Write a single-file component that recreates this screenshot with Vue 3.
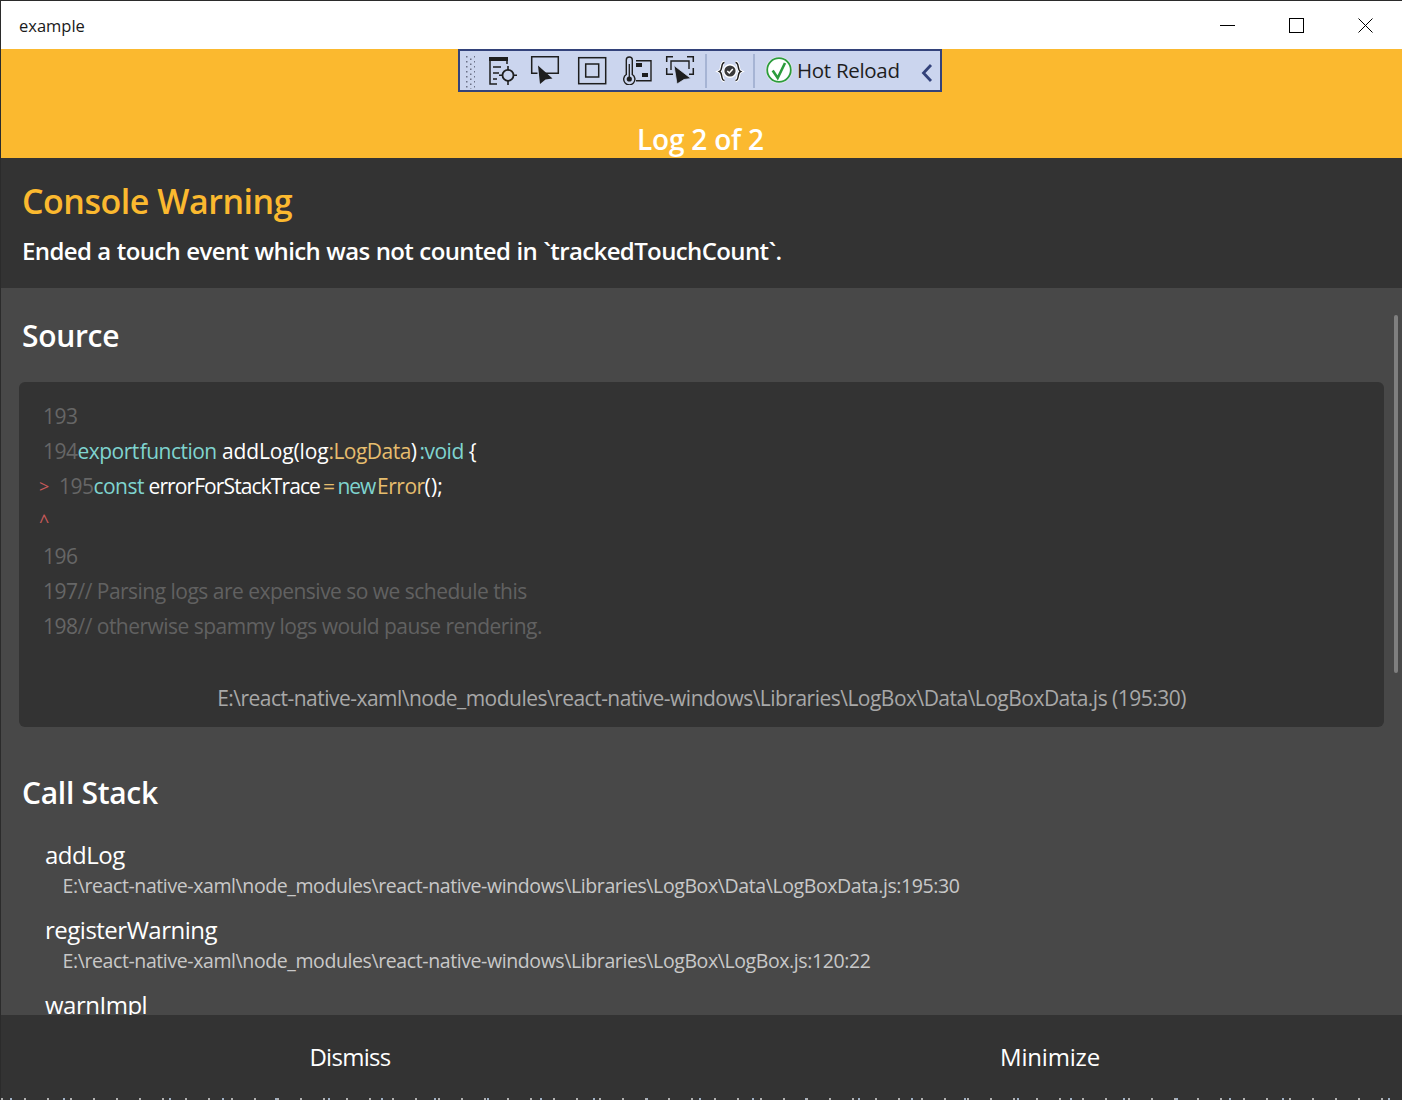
<script setup>
const stack = [
  { name: 'addLog', loc: 'E:\\react-native-xaml\\node_modules\\react-native-windows\\Libraries\\LogBox\\Data\\LogBoxData.js:195:30' },
  { name: 'registerWarning', loc: 'E:\\react-native-xaml\\node_modules\\react-native-windows\\Libraries\\LogBox\\LogBox.js:120:22' },
  { name: 'warnImpl', loc: '' },
]
</script>

<template>
  <div class="window">
    <header class="titlebar">
      <span class="title">example</span>
      <div class="caption">
        <svg class="cap" width="15" height="15" viewBox="0 0 15 15"><path d="M0 7.5H15" stroke="#000" fill="none" /></svg>
        <svg class="cap" width="15" height="15" viewBox="0 0 15 15"><rect x="0.5" y="0.5" width="14" height="14" stroke="#000" fill="none" /></svg>
        <svg class="cap" width="15" height="15" viewBox="0 0 15 15"><path d="M0.5 0.5L14.5 14.5M14.5 0.5L0.5 14.5" stroke="#000" fill="none" /></svg>
      </div>
    </header>

    <section class="banner">
      <div class="toolbar">
        <svg class="grip" width="12" height="34" viewBox="0 0 12 34">
          <g fill="#6b7085">
            <rect v-for="i in 7" :key="'a'+i" x="3" :y="i * 5 - 4" width="1.5" height="1.5" />
            <rect v-for="i in 7" :key="'b'+i" x="7" :y="i * 5 - 1.5" width="1.5" height="1.5" />
            <rect v-for="i in 7" :key="'c'+i" x="11" :y="i * 5 - 4" width="1" height="1.5" />
          </g>
        </svg>
        <svg class="ic1" width="30" height="30" viewBox="0 0 30 30">
          <path d="M2 2H21V6H2z" fill="#1e1e1e" />
          <path d="M3 6V29H10M20 6V9" fill="none" stroke="#1e1e1e" stroke-width="1.5" />
          <path d="M6 12H14M6 18H12M6 24H10" stroke="#1e1e1e" stroke-width="1.5" />
          <circle cx="21" cy="20.3" r="5.5" fill="none" stroke="#1e1e1e" stroke-width="1.8" />
          <path d="M21 11V15M21 26V30M12 20.3H16M26 20.3H30" stroke="#1e1e1e" stroke-width="1.6" />
        </svg>
        <svg class="ic2" width="30" height="30" viewBox="0 0 30 30">
          <path d="M7.5 18.3H1.7V1.7H28.3V18.3H15" fill="none" stroke="#1e1e1e" stroke-width="1.5" />
          <path d="M8 10.5L22.5 23.5L15.5 24.5L10 29z" fill="#1e1e1e" />
        </svg>
        <svg class="ic3" width="30" height="30" viewBox="0 0 30 30">
          <rect x="1.7" y="2.7" width="27" height="26" fill="none" stroke="#1e1e1e" stroke-width="1.5" />
          <rect x="8.7" y="9" width="13" height="13" fill="none" stroke="#1e1e1e" stroke-width="1.5" />
        </svg>
        <svg class="ic4" width="30" height="30" viewBox="0 0 30 30">
          <path d="M4.3 5a3 3 0 0 1 6 0V19.5a5.6 5.6 0 1 1-6 0z" fill="none" stroke="#1e1e1e" stroke-width="1.4" />
          <circle cx="7.3" cy="24" r="2.6" fill="#1e1e1e" />
          <path d="M7.3 9V22" stroke="#1e1e1e" stroke-width="1.3" />
          <path d="M14 5.7H29V25.7H14" fill="none" stroke="#1e1e1e" stroke-width="1.4" />
          <rect x="14" y="8" width="6" height="4" fill="#1e1e1e" />
          <rect x="20" y="18" width="6" height="4" fill="#1e1e1e" />
        </svg>
        <svg class="ic5" width="30" height="30" viewBox="0 0 30 30">
          <path d="M1.7 7V1.7H8M22 1.7H28.3V7M1.7 13V19.3H8M28.3 13V19.3H24" fill="none" stroke="#1e1e1e" stroke-width="1.5" />
          <path d="M6 15V6H24V14" fill="none" stroke="#1e1e1e" stroke-width="1.4" />
          <path d="M9 10.5L26 23.5L19 24.5L12 29z" fill="#1e1e1e" stroke="#cbd5ee" stroke-width="0.8" />
        </svg>
        <span class="sep sep1"></span>
        <svg class="ic6" width="30" height="30" viewBox="0 0 30 30">
          <path d="M9.5 7.5C5.5 7.5 8 15 4.5 16.5C8 18 5.5 25.5 9.5 25.5M20.5 7.5C24.5 7.5 22 15 25.5 16.5C22 18 24.5 25.5 20.5 25.5" fill="none" stroke="#fff" stroke-width="3.4" />
          <path d="M9.5 7.5C5.5 7.5 8 15 4.5 16.5C8 18 5.5 25.5 9.5 25.5M20.5 7.5C24.5 7.5 22 15 25.5 16.5C22 18 24.5 25.5 20.5 25.5" fill="none" stroke="#1e1e1e" stroke-width="1.5" />
          <circle cx="15" cy="16" r="7" fill="#fff" />
          <circle cx="15" cy="16" r="5.6" fill="#3a3a3a" />
          <path d="M12.3 16L14.3 18L17.8 14" fill="none" stroke="#fff" stroke-width="1.5" />
        </svg>
        <span class="sep sep2"></span>
        <svg class="ic7" width="30" height="30" viewBox="0 0 30 30">
          <circle cx="15" cy="15" r="13.3" fill="#fff" stroke="#d4dbe8" stroke-width="0.8" />
          <circle cx="15" cy="15" r="11.8" fill="#fff" stroke="#2c9c3c" stroke-width="1.8" />
          <path d="M8.7 15.5L13.7 23L21 8" fill="none" stroke="#2c9c3c" stroke-width="2.6" />
        </svg>
        <span class="hot">Hot Reload</span>
        <svg class="chev" width="12" height="18" viewBox="0 0 12 18"><path d="M10 1L2.5 9L10 17" fill="none" stroke="#33427a" stroke-width="2.8" /></svg>
      </div>
      <div class="log-count">Log 2 of 2</div>
    </section>

    <section class="summary">
      <h1 class="level">Console Warning</h1>
      <p class="message">Ended a touch event which was not counted in `trackedTouchCount`.</p>
    </section>

    <main class="body">
      <div class="scrollbar"></div>
      <h2 class="heading">Source</h2>
      <div class="code">
        <div class="line"><span class="num">193</span></div>
        <div class="line"><span class="num">194</span><span class="kw">export</span><span class="kw g1">function</span><span class="pl wide"> addLog(log</span><span class="ty">:LogData</span><span class="pl">)</span><span class="kw g2">:void</span><span class="pl"> {</span></div>
        <div class="line"><span class="mark">&gt;</span><span class="num">195</span><span class="kw">const</span><span class="pl tight"> errorForStackTrace</span><span class="ty eq">=</span><span class="kw tighter">new</span><span class="ty err">Error</span><span class="pl loose">();</span></div>
        <div class="line"><span class="caret">^</span></div>
        <div class="line"><span class="num">196</span></div>
        <div class="line"><span class="num">197</span><span class="cm">// Parsing logs are expensive so we schedule this</span></div>
        <div class="line"><span class="num">198</span><span class="cm">// otherwise spammy logs would pause rendering.</span></div>
        <div class="file">E:\react-native-xaml\node_modules\react-native-windows\Libraries\LogBox\Data\LogBoxData.js (195:30)</div>
      </div>
      <h2 class="heading stack-heading">Call Stack</h2>
      <div class="frames">
        <div v-for="f in stack" :key="f.name" class="frame">
          <div class="fname">{{ f.name }}</div>
          <div v-if="f.loc" class="floc">{{ f.loc }}</div>
        </div>
      </div>
    </main>

    <footer class="actions">
      <div class="action">Dismiss</div>
      <div class="action">Minimize</div>
    </footer>
    <div class="strip"></div>
  </div>
</template>

<style>
html, body { margin: 0; background: #333; }
</style>

<style scoped>
.window {
  width: 1402px;
  height: 1100px;
  box-sizing: border-box;
  border-top: 1px solid #2b2b2b;
  border-left: 1px solid #2b2b2b;
  overflow: hidden;
  display: flex;
  flex-direction: column;
  font-family: "Open Sans", "Noto Sans", sans-serif;
  color: #fff;
  background: #333;
}
.titlebar {
  height: 48px;
  flex: none;
  box-sizing: border-box;
  padding-top: 1px;
  background: #fff;
  color: #1a1a1a;
  display: flex;
  align-items: center;
  justify-content: space-between;
}
.title { font-size: 16.5px; margin-left: 18px; }
.caption { display: flex; gap: 54px; margin-right: 29px; }
.cap { display: block; }
.banner {
  height: 109px;
  flex: none;
  background: #fbb92f;
  display: flex;
  flex-direction: column;
  align-items: center;
}
.toolbar {
  width: 484px;
  height: 43px;
  margin-right: 3px;
  box-sizing: border-box;
  border: 2px solid #33427a;
  padding-top: 4px;
  background: #cbd5ee;
  display: flex;
  align-items: flex-start;
  color: #1e1e1e;
  flex: none;
}
.toolbar svg { flex: none; }
.grip { margin-left: 3px; }
.ic1 { margin-left: 12px; }
.ic2 { margin-left: 13px; }
.ic3 { margin-left: 17px; }
.ic4 { margin-left: 15px; }
.ic5 { margin-left: 13px; }
.sep { width: 2px; height: 34px; margin-top: -1px; background: #a6b4d4; flex: none; }
.sep1 { margin-left: 10px; }
.ic6 { margin-left: 8px; }
.sep2 { margin-left: 8px; }
.ic7 { margin-left: 9px; }
.hot { margin-left: 3px; width: 103px; font-size: 20.5px; line-height: 30px; letter-spacing: -0.3px; white-space: nowrap; }
.chev { margin-left: 21px; margin-top: 9px; }
.log-count {
  margin-top: 30px;
  margin-right: 2px;
  font-size: 28px;
  line-height: 34px;
  font-weight: 600;
  letter-spacing: -0.2px;
}
.summary {
  height: 130px;
  flex: none;
  box-sizing: border-box;
  background: #333;
  padding: 21px 21px 0;
}
.level {
  margin: 0;
  font-size: 34px;
  line-height: 44px;
  font-weight: 600;
  color: #fbb92f;
  letter-spacing: -0.47px;
}
.message {
  margin: 11px 0 0;
  font-size: 24px;
  line-height: 34px;
  font-weight: 600;
  letter-spacing: -0.62px;
  word-spacing: 0.5px;
  white-space: nowrap;
}
.body {
  position: relative;
  height: 727px;
  flex: none;
  overflow: hidden;
  box-sizing: border-box;
  background: #484848;
  padding: 26px 0 0;
}
.scrollbar {
  position: absolute;
  left: 1393px;
  top: 27px;
  width: 4px;
  height: 358px;
  border-radius: 2px;
  background: #7f7f7f;
}
.heading {
  margin: 0 0 0 21px;
  font-size: 30px;
  line-height: 44px;
  font-weight: 600;
  letter-spacing: -0.3px;
}
.code {
  margin: 24px 18px 0 18px;
  height: 345px;
  box-sizing: border-box;
  background: #333;
  border-radius: 6px;
  padding: 17px 24px 0;
  font-size: 21px;
  letter-spacing: -0.52px;
}
.line { height: 35px; line-height: 35px; white-space: nowrap; display: flex; }
.num { color: #666; }
.kw { color: #7fd4cf; }
.pl { color: #fff; white-space: pre; }
.ty { color: #e6bd6e; }
.cm { color: #616161; }
.g1 { margin-left: 1px; }
.g2 { margin-left: 3px; }
.wide { letter-spacing: -0.15px; }
.tight { letter-spacing: -0.9px; }
.tighter { letter-spacing: -1.1px; }
.loose { letter-spacing: 0.2px; }
.eq { margin: 0 3px; }
.err { margin-left: 2px; }
.mark, .caret { color: #c85a5a; font-size: 18px; }
.mark { width: 20px; margin-left: -4px; flex: none; }
.caret { margin-left: -4px; }
.file {
  margin-top: 39px;
  text-align: center;
  color: #a8a8a8;
  font-size: 21px;
  line-height: 30px;
  white-space: nowrap;
}
.stack-heading { margin-top: 44px; }
.frames { margin: 24px 0 0 44px; }
.frame { margin-bottom: 14px; }
.fname { font-size: 24px; line-height: 32px; letter-spacing: -0.5px; }
.floc { margin: 1px 0 0 17.5px; font-size: 19.5px; line-height: 28px; color: #c8c8c8; letter-spacing: -0.4px; white-space: nowrap; }
.actions {
  width: 1400px;
  margin-left: -1px;
  height: 80px;
  flex: none;
  display: flex;
  background: #333;
}
.action {
  flex: 1;
  text-align: center;
  font-size: 24px;
  line-height: 84px;
  letter-spacing: -0.7px;
}
.action + .action { letter-spacing: -0.2px; }
.strip {
  flex: 1;
  background-color: #333;
  background-image:
    repeating-linear-gradient(90deg, #b0b0b0 0 2px, transparent 2px 23px),
    repeating-linear-gradient(90deg, transparent 0 9px, #9fb0c4 9px 11px, transparent 11px 53px);
  background-size: 100% 2px;
  background-position: 0 100%;
  background-repeat: no-repeat;
}
</style>
